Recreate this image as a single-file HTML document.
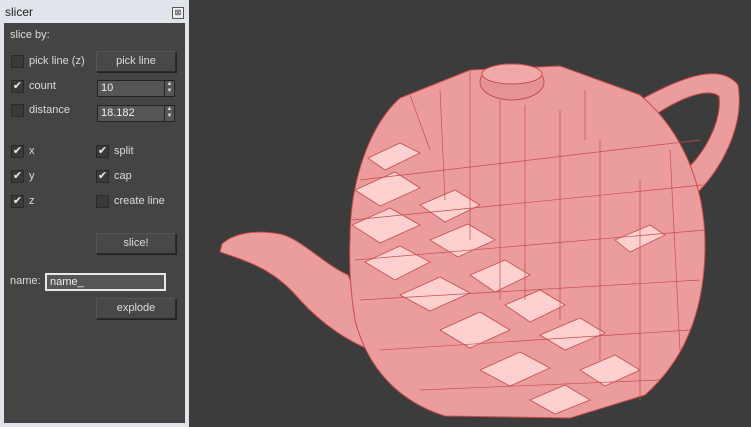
<!DOCTYPE html>
<html><head><style>
body{margin:0;width:751px;height:427px;background:#3c3c3c;overflow:hidden;position:relative;font-family:"Liberation Sans",sans-serif;font-size:11px;color:#dcdcdc}
.panel{position:absolute;left:0;top:0;width:189px;height:427px;background:#dfe5eb}
.title{position:absolute;left:5px;top:5px;color:#222;font-size:12px}
.close{position:absolute;left:172px;top:7px;width:10px;height:10px;border:1px solid #555;background:#eee;font-size:8px;line-height:10px;text-align:center;color:#333}
.body{position:absolute;left:4px;top:23px;width:181px;height:400px;background:#444}
.t{position:absolute;color:#dcdcdc}
.cb{position:absolute;width:11px;height:11px;background:#3a3a3a;border:1px solid #2a2a2a;color:#eee;font-size:11px;line-height:11px;text-align:center}
.btn{position:absolute;width:78px;height:19px;background:#484848;border:1px solid #2a2a2a;border-top-color:#555;border-left-color:#555;box-shadow:1px 1px 0 #222;text-align:center;line-height:19px;color:#dcdcdc}
.sp{position:absolute;width:63px;height:15px;background:#555;border:1px solid #222;line-height:15px;padding-left:3px;color:#eee}
.arr{position:absolute;width:9px;height:15px;background:#555;border:1px solid #222;font-size:6px;line-height:7px;text-align:center;color:#ddd}
</style></head><body>
<div class="panel">
<div class="title">slicer</div><div class="close">⊠</div>
<div class="body"></div>
</div>
<div class="t" style="left:10px;top:29px">slice by:</div>
<div class="cb" style="left:11px;top:55px"></div><div class="t" style="left:29px;top:55px">pick line (z)</div>
<div class="btn" style="left:96px;top:51px">pick line</div>
<div class="cb" style="left:11px;top:80px">✔</div><div class="t" style="left:29px;top:80px">count</div>
<div class="sp" style="left:97px;top:80px">10</div><div class="arr" style="left:164px;top:80px">▲<br>▼</div>
<div class="cb" style="left:11px;top:104px"></div><div class="t" style="left:29px;top:104px">distance</div>
<div class="sp" style="left:97px;top:105px">18.182</div><div class="arr" style="left:164px;top:105px">▲<br>▼</div>
<div class="cb" style="left:11px;top:145px">✔</div><div class="t" style="left:29px;top:145px">x</div>
<div class="cb" style="left:96px;top:145px">✔</div><div class="t" style="left:114px;top:145px">split</div>
<div class="cb" style="left:11px;top:170px">✔</div><div class="t" style="left:29px;top:170px">y</div>
<div class="cb" style="left:96px;top:170px">✔</div><div class="t" style="left:114px;top:170px">cap</div>
<div class="cb" style="left:11px;top:195px">✔</div><div class="t" style="left:29px;top:195px">z</div>
<div class="cb" style="left:96px;top:195px"></div><div class="t" style="left:114px;top:195px">create line</div>
<div class="btn" style="left:96px;top:233px">slice!</div>
<div class="t" style="left:10px;top:275px">name:</div>
<div style="position:absolute;left:45px;top:273px;width:114px;height:14px;background:#555;border:2px solid #e8e8e8;color:#eee;padding-left:3px;line-height:14px">name_</div>
<div class="btn" style="left:96px;top:298px">explode</div>

<svg style="position:absolute;left:0;top:0" width="751" height="427" viewBox="0 0 751 427">
<g stroke="#c84c4c" stroke-width="1" fill="#eb9c9c">
<path d="M640,100 C680,78 720,62 738,85 C745,125 722,170 692,198 L684,172 C708,150 722,118 719,96 C705,86 672,102 645,122 Z"/>
<path d="M348,275 C325,265 300,238 280,234 C258,230 235,232 222,244 L220,252 C250,262 275,270 300,300 C320,322 350,345 385,355 Z"/>
<path d="M350,240 C350,180 370,125 400,98 L470,70 L560,66 L640,95 C682,130 705,185 705,245 C705,315 682,362 645,395 L570,418 L445,416 C400,402 368,370 355,320 C350,290 349,265 350,240 Z"/>
</g>
<g fill="#ffd0d0" stroke="#c84c4c" stroke-width="0.8">
<path d="M368,158 L400,143 L420,153 L385,170 Z"/>
<path d="M355,190 L395,172 L420,188 L380,206 Z"/>
<path d="M352,225 L390,208 L420,225 L380,243 Z"/>
<path d="M420,205 L455,190 L480,205 L445,222 Z"/>
<path d="M365,262 L400,246 L430,262 L395,280 Z"/>
<path d="M430,240 L468,224 L495,240 L458,257 Z"/>
<path d="M400,295 L440,277 L470,293 L430,311 Z"/>
<path d="M470,275 L505,260 L530,275 L495,292 Z"/>
<path d="M505,305 L540,290 L565,305 L530,322 Z"/>
<path d="M440,330 L480,312 L510,330 L470,348 Z"/>
<path d="M540,335 L580,318 L605,333 L565,350 Z"/>
<path d="M480,370 L520,352 L550,368 L510,386 Z"/>
<path d="M580,370 L615,355 L640,370 L605,386 Z"/>
<path d="M530,400 L565,385 L590,400 L555,414 Z"/>
<path d="M615,240 L650,225 L665,235 L630,252 Z"/>
</g>
<g stroke="#c84c4c" stroke-width="0.7" fill="none">
<path d="M410,95 L430,150 M470,70 L470,240 M500,100 L500,300 M525,105 L525,300 M560,110 L560,320 M600,140 L600,360 M640,180 L640,400 M670,150 L680,350 M585,90 L585,140 M440,90 L445,200"/>
<path d="M360,180 L700,140 M355,260 L705,230 M360,300 L700,280 M380,350 L690,330 M420,390 L660,380 M352,220 L703,185"/>
</g>
<ellipse cx="512" cy="82" rx="32" ry="18" fill="#e49494" stroke="#c84c4c"/>
<ellipse cx="512" cy="74" rx="30" ry="10" fill="#f0a8a8" stroke="#c84c4c"/>
</svg>
</body></html>
